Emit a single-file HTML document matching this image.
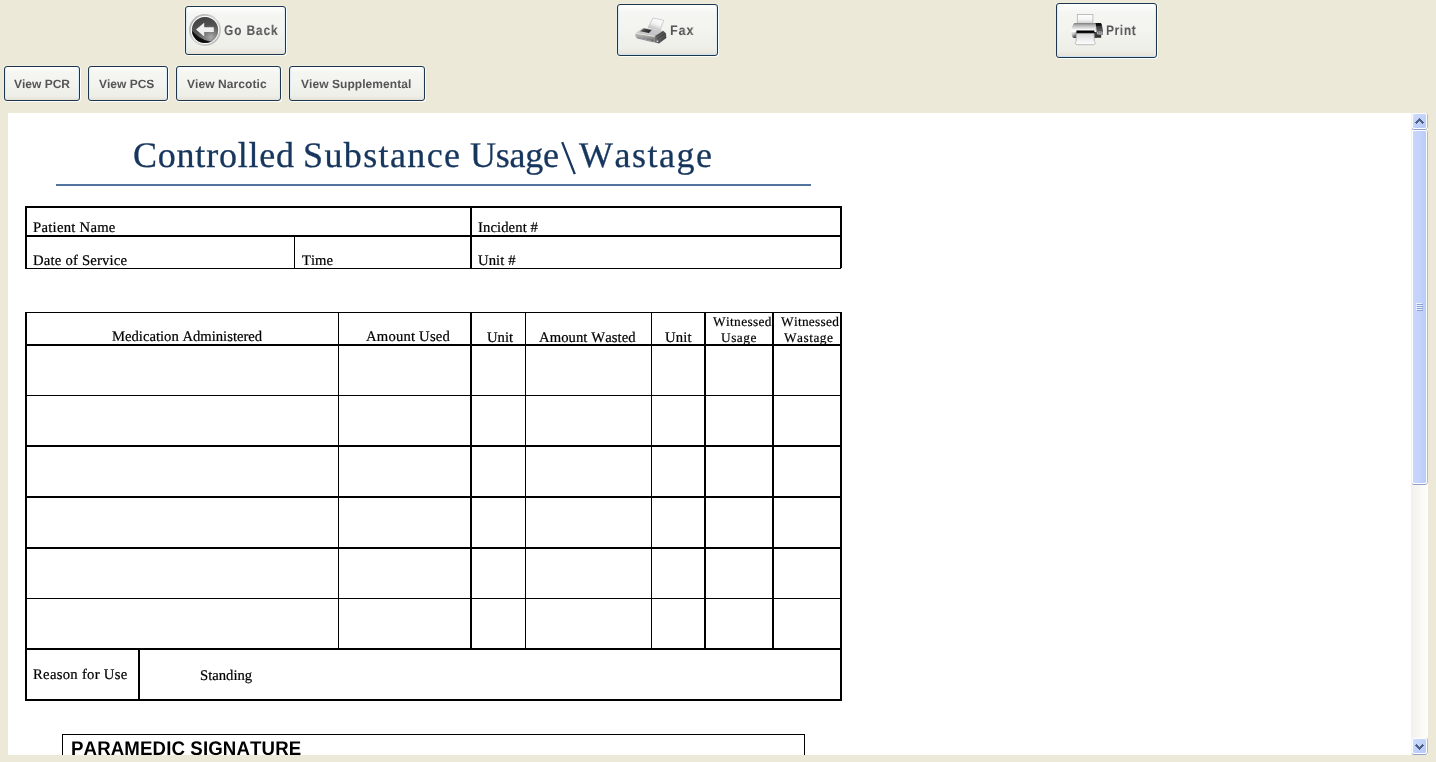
<!DOCTYPE html>
<html>
<head>
<meta charset="utf-8">
<title>Controlled Substance Usage\Wastage</title>
<style>
html,body{margin:0;padding:0;overflow:hidden;}
body{font-kerning:none;text-rendering:geometricPrecision;width:1436px;height:762px;overflow:hidden;background:#ece9d8;position:relative;font-family:"Liberation Sans",sans-serif;}
.abs{position:absolute;}
.btn{position:absolute;box-sizing:border-box;border:1px solid #1c364e;border-radius:3px;
  background:linear-gradient(to bottom,#ffffff 0%,#fbfbf9 6%,#f5f5f2 16%,#f3f3ef 50%,#efefe9 86%,#e9e6dc 96%,#e4dfd3 100%);
  box-shadow:1px 1px 0 rgba(255,255,255,0.75),0 0 0 1px rgba(255,255,255,0.2),inset 1px 0 0 #d9ecfa,inset -1px 0 0 #d9ecfa;}
.btn.df{box-shadow:1px 1px 0 rgba(255,255,255,0.75),0 0 0 1px rgba(255,255,255,0.2),inset 1px 0 0 #d9ecfa,inset -1px 0 0 #d9ecfa,inset 0 -1px 0 #cde0f1;}
.btn .lbl{will-change:transform;position:absolute;white-space:nowrap;font-weight:bold;color:#555555;line-height:1;}
.b2 .lbl{font-size:12px;}
#panel{position:absolute;left:8px;top:113px;width:1403px;height:642px;background:#ffffff;overflow:hidden;}
.ln{position:absolute;background:#000;}
.t{-webkit-text-stroke:0.22px #000;will-change:transform;position:absolute;white-space:nowrap;font-family:"Liberation Serif",serif;font-size:14.667px;line-height:1;color:#000;}
.ts{-webkit-text-stroke:0.2px #000;will-change:transform;position:absolute;white-space:nowrap;font-family:"Liberation Serif",serif;font-size:13.333px;line-height:1;color:#000;}
.tt{will-change:transform;-webkit-text-stroke:0.3px #17365d;position:absolute;white-space:nowrap;font-family:"Liberation Serif",serif;font-size:36px;line-height:1;color:#17365d;}
.sbbtn{position:absolute;box-sizing:border-box;width:15px;border:1px solid #ffffff;border-radius:2px;background:linear-gradient(135deg,#cddbfd 0%,#c1d2fa 50%,#b6caf7 100%);background-clip:padding-box;box-shadow:1px 0 0 #b4bccb,0 1px 0 #8fa1c6;}
</style>
</head>
<body>

<!-- top row buttons -->
<div class="btn" id="bBack" style="left:185px;top:6px;width:101px;height:49px;">
  <svg class="abs" style="left:3px;top:7px;" width="32" height="32" viewBox="0 0 32 32">
    <defs>
      <linearGradient id="ring" x1="0" y1="0" x2="1" y2="1">
        <stop offset="0" stop-color="#a4a4a4"/><stop offset="0.5" stop-color="#d6d6d6"/><stop offset="1" stop-color="#b0b0b0"/>
      </linearGradient>
      <linearGradient id="disc" x1="0.3" y1="0" x2="0.6" y2="1">
        <stop offset="0" stop-color="#404040"/><stop offset="0.6" stop-color="#5a5a5a"/><stop offset="1" stop-color="#6c6c6c"/>
      </linearGradient>
      <radialGradient id="dhl" cx="0.72" cy="0.78" r="0.5">
        <stop offset="0" stop-color="#b0b0b0" stop-opacity="0.95"/><stop offset="0.6" stop-color="#909090" stop-opacity="0.45"/><stop offset="1" stop-color="#808080" stop-opacity="0"/>
      </radialGradient>
      <clipPath id="dclip"><circle cx="16" cy="16" r="13"/></clipPath>
      <mask id="cres"><rect width="32" height="32" fill="#fff"/><circle cx="28" cy="-4" r="32.4" fill="#000"/></mask>
      <filter id="ib" x="-10%" y="-10%" width="120%" height="120%"><feGaussianBlur stdDeviation="0.45"/></filter>
    </defs>
    <circle cx="16" cy="16" r="15.9" fill="url(#ring)"/>
    <circle cx="16" cy="16" r="13.6" fill="none" stroke="#f8f8f8" stroke-width="1.3"/>
    <circle cx="16" cy="16" r="13.1" fill="url(#disc)"/>
    <circle cx="16" cy="16" r="13.1" fill="url(#dhl)"/>
    <g clip-path="url(#dclip)"><g filter="url(#ib)"><rect width="32" height="32" fill="#0a0a0a" mask="url(#cres)"/></g></g>
    <path d="M7 15.6 L15.2 8.8 L15.2 13.3 L24.8 13.3 L24.8 18 L15.2 18 L15.2 22.6 Z" fill="#f0f0f0" filter="url(#ib)"/>
  </svg>
  <span class="lbl" id="lBack" style="left:38px;top:16px;font-size:14px;letter-spacing:1.03px;transform:scaleX(0.85);transform-origin:0 0;">Go Back</span>
</div>

<div class="btn df" id="bFax" style="left:617px;top:4px;width:101px;height:52px;">
  <svg class="abs" style="left:14px;top:9px;" width="38" height="32" viewBox="632 14 38 32">
    <defs>
      <linearGradient id="fp" x1="0.7" y1="0" x2="0.2" y2="1"><stop offset="0" stop-color="#ffffff"/><stop offset="0.5" stop-color="#f2f2f2"/><stop offset="1" stop-color="#b4b4b4"/></linearGradient>
      <linearGradient id="ft" x1="0" y1="0" x2="0.3" y2="1"><stop offset="0" stop-color="#a8a8a8"/><stop offset="0.5" stop-color="#cbcbcb"/><stop offset="1" stop-color="#c2c2c2"/></linearGradient>
      <linearGradient id="ff" x1="0" y1="0" x2="0.15" y2="1"><stop offset="0" stop-color="#c0c0c0"/><stop offset="0.45" stop-color="#a2a2a2"/><stop offset="1" stop-color="#6c6c72"/></linearGradient>
      <linearGradient id="fs" x1="0" y1="0" x2="1" y2="0.6"><stop offset="0" stop-color="#9a9a9a"/><stop offset="0.45" stop-color="#686868"/><stop offset="1" stop-color="#404040"/></linearGradient>
      <linearGradient id="fd" x1="0" y1="0" x2="1" y2="0.5"><stop offset="0" stop-color="#747474"/><stop offset="0.6" stop-color="#3a3a3a"/><stop offset="1" stop-color="#262626"/></linearGradient>
      <filter id="fblur" x="-10%" y="-10%" width="120%" height="120%"><feGaussianBlur stdDeviation="0.4"/></filter>
    </defs>
    <g filter="url(#fblur)">
      <polygon points="653,18 663.7,20.3 660.2,29.8 648.2,27.4" fill="url(#fp)" stroke="#bdbdbd" stroke-width="0.7"/>
      <polygon points="643.3,27.9 663.1,30.6 654.7,35.9 635.6,33" fill="url(#ft)"/>
      <polygon points="651.9,30.6 658.4,31.6 655.6,33.6 649.6,32.6" fill="#c3c6d2"/>
      <polygon points="644,28.4 651.6,29.9 649,33 640,31.2" fill="url(#fd)"/>
      <path d="M635.2 33.6 L654.4 36.7 L654 42 L651.5 41.2 L650 40.4 L647.5 40.4 L646 39.6 L643.5 39.6 L642 38.8 L639.6 38.8 L638.2 38.2 L636.2 37.6 Q634.8 35.6 635.2 33.6Z" fill="url(#ff)"/>
      <path d="M654.6 36 L663.1 30.7 L666 33.3 L666.3 38 L659 43.5 L654.2 42.2 Z" fill="url(#fs)"/>
      <path d="M656 36.6 L663.4 32 M657 38.6 L664.4 33.8" stroke="#2c2c2c" stroke-width="0.7" fill="none"/>
      <rect x="654.4" y="37.6" width="2" height="2" fill="#6e6e6e"/>
      <rect x="656.6" y="40.6" width="1.6" height="1.4" fill="#dcdcdc"/>
      <path d="M636.8 37.9 L653 41.9" stroke="#77777c" stroke-width="0.7" fill="none"/>
    </g>
  </svg>
  <span class="lbl" id="lFax" style="left:52px;top:18px;font-size:14px;letter-spacing:1.0px;transform:scaleX(0.9);transform-origin:0 0;">Fax</span>
</div>

<div class="btn df" id="bPrint" style="left:1056px;top:3px;width:101px;height:55px;">
  <svg class="abs" style="left:11px;top:8px;" width="38" height="36" viewBox="1068 12 38 36">
    <defs>
      <linearGradient id="pp1" x1="0" y1="0" x2="0" y2="1"><stop offset="0" stop-color="#ffffff"/><stop offset="0.55" stop-color="#f4f4f4"/><stop offset="1" stop-color="#c9c9c9"/></linearGradient>
      <linearGradient id="pb1" x1="0" y1="0" x2="0" y2="1"><stop offset="0" stop-color="#7d7d7d"/><stop offset="0.35" stop-color="#b4b4b4"/><stop offset="1" stop-color="#f6f6f6"/></linearGradient>
      <linearGradient id="pl1" x1="0" y1="0" x2="0.6" y2="1"><stop offset="0" stop-color="#ffffff"/><stop offset="0.45" stop-color="#bdbdbd"/><stop offset="1" stop-color="#2e2e2e"/></linearGradient>
      <linearGradient id="pp2" x1="0" y1="0" x2="0" y2="1"><stop offset="0" stop-color="#d6d6d6"/><stop offset="0.5" stop-color="#ececec"/><stop offset="1" stop-color="#ffffff"/></linearGradient>
      <linearGradient id="pr1" x1="0" y1="0" x2="0" y2="1"><stop offset="0" stop-color="#1f1f1f"/><stop offset="0.5" stop-color="#5a5a5a"/><stop offset="1" stop-color="#2a2a2a"/></linearGradient>
      <filter id="pblur" x="-10%" y="-10%" width="120%" height="120%"><feGaussianBlur stdDeviation="0.35"/></filter>
    </defs>
    <g filter="url(#pblur)">
      <!-- right dark unit -->
      <path d="M1095 23 L1100.4 22.9 Q1101.5 23.1 1101.8 24.3 L1103 31 L1103 34.6 L1101.2 34.8 L1101.2 37.8 L1095 37.8 Z" fill="url(#pr1)"/>
      <rect x="1096.2" y="23" width="4.6" height="2.8" fill="#0c0c0c"/>
      <rect x="1097" y="31.4" width="5.6" height="3" rx="0.8" fill="#b9b9b9"/>
      <rect x="1098.2" y="32.2" width="1.2" height="1.3" fill="#5a5a5a"/><rect x="1100.2" y="32.2" width="1.2" height="1.3" fill="#5a5a5a"/>
      <!-- top paper -->
      <rect x="1077.3" y="14.5" width="15.6" height="9.5" fill="url(#pp1)" stroke="#b2b2b2" stroke-width="0.8"/>
      <!-- body top -->
      <path d="M1074.8 23 L1094.6 23 Q1095.6 23 1095.8 24 L1096.4 29.6 L1071.6 29.6 Q1072.8 23 1074.8 23 Z" fill="url(#pb1)"/>
      <!-- front band -->
      <path d="M1071.4 29.4 L1096.5 29.4 L1096.5 32.4 L1071.2 32.4 Q1070.6 30.6 1071.4 29.4Z" fill="#fbfbfb"/>
      <rect x="1076.4" y="30" width="18" height="0.9" fill="#8c8c8c"/>
      <!-- lower left body -->
      <path d="M1071.2 32 L1077 32 L1077 38 L1073.8 38 Q1071.6 37.4 1071.2 32Z" fill="url(#pl1)"/>
      <rect x="1093.8" y="32" width="2.8" height="5.8" fill="#3c3c3c"/>
      <!-- slot -->
      <rect x="1076.4" y="30.8" width="18" height="2.9" fill="#050505"/>
      <!-- output paper -->
      <path d="M1076.3 33.4 L1094.1 33.4 L1094.4 41.4 Q1095.2 42.2 1095.2 43.2 Q1095 44.7 1093.4 44.7 L1077 44.7 Q1075.3 44.7 1075.2 43.2 Q1075.2 42.2 1076 41.4 Z" fill="url(#pp2)" stroke="#a4a4a4" stroke-width="0.7"/>
    </g>
  </svg>
  <span class="lbl" id="lPrint" style="left:49px;top:19px;font-size:14px;letter-spacing:0.78px;transform:scaleX(0.85);transform-origin:0 0;">Print</span>
</div>

<!-- second row buttons -->
<div class="btn b2" style="left:4px;top:66px;width:76px;height:35px;"><span class="lbl" id="l1" style="left:9px;top:11px;">View PCR</span></div>
<div class="btn b2" style="left:88px;top:66px;width:80px;height:35px;"><span class="lbl" id="l2" style="left:10px;top:11px;">View PCS</span></div>
<div class="btn b2" style="left:176px;top:66px;width:105px;height:35px;"><span class="lbl" id="l3" style="left:10px;top:11px;letter-spacing:0.08px;">View Narcotic</span></div>
<div class="btn b2" style="left:289px;top:66px;width:136px;height:35px;"><span class="lbl" id="l4" style="left:11px;top:11px;letter-spacing:0.06px;">View Supplemental</span></div>

<!-- document panel -->
<div id="panel">
<!--LINES-->
<div class="abs" style="left:48px;top:71px;width:755px;height:2px;background:#52749f"></div>
<div class="ln" style="left:17px;top:93px;width:817px;height:2px"></div>
<div class="ln" style="left:17px;top:122px;width:817px;height:2px"></div>
<div class="ln" style="left:17px;top:155px;width:816px;height:1px"></div>
<div class="ln" style="left:17px;top:93px;width:2px;height:63px"></div>
<div class="ln" style="left:832px;top:93px;width:2px;height:62px"></div>
<div class="ln" style="left:462px;top:93px;width:2px;height:63px"></div>
<div class="ln" style="left:286px;top:124px;width:1px;height:32px"></div>
<div class="ln" style="left:17px;top:199px;width:817px;height:1px"></div>
<div class="ln" style="left:17px;top:231px;width:817px;height:2px"></div>
<div class="ln" style="left:17px;top:282px;width:817px;height:1px"></div>
<div class="ln" style="left:17px;top:332px;width:817px;height:2px"></div>
<div class="ln" style="left:17px;top:383px;width:817px;height:2px"></div>
<div class="ln" style="left:17px;top:434px;width:817px;height:2px"></div>
<div class="ln" style="left:17px;top:485px;width:817px;height:1px"></div>
<div class="ln" style="left:17px;top:535px;width:817px;height:2px"></div>
<div class="ln" style="left:17px;top:586px;width:817px;height:2px"></div>
<div class="ln" style="left:17px;top:199px;width:2px;height:389px"></div>
<div class="ln" style="left:832px;top:199px;width:2px;height:389px"></div>
<div class="ln" style="left:330px;top:199px;width:1px;height:338px"></div>
<div class="ln" style="left:462px;top:199px;width:2px;height:338px"></div>
<div class="ln" style="left:517px;top:199px;width:1px;height:338px"></div>
<div class="ln" style="left:643px;top:199px;width:1px;height:338px"></div>
<div class="ln" style="left:696px;top:199px;width:2px;height:338px"></div>
<div class="ln" style="left:764px;top:199px;width:2px;height:338px"></div>
<div class="ln" style="left:130px;top:537px;width:2px;height:51px"></div>
<div class="ln" style="left:54px;top:621px;width:743px;height:1px"></div>
<div class="ln" style="left:54px;top:621px;width:1px;height:27px"></div>
<div class="ln" style="left:796px;top:621px;width:1px;height:27px"></div>
<!--/LINES-->
<!--TEXT-->
<span class="tt" id="w1" style="left:125.00px;top:24px;letter-spacing:0.78px;">Controlled</span>
<span class="tt" id="w2" style="left:295.00px;top:24px;letter-spacing:1.38px;">Substance</span>
<span class="tt" id="w3" style="left:462.00px;top:24px;letter-spacing:-0.25px;">Usage</span>
<span class="tt" id="w5" style="left:570.50px;top:24px;letter-spacing:1.50px;">Wastage</span>
<svg class="abs" style="left:551px;top:27px" width="24" height="40" viewBox="0 0 24 40"><line x1="3.2" y1="2.2" x2="15.8" y2="34.2" stroke="#17365d" stroke-width="2.3"/></svg>
<span class="t" id="tPN" style="left:24.50px;top:107.72px;letter-spacing:0.27px;">Patient Name</span>
<span class="t" id="tIN" style="left:469.50px;top:107.72px;letter-spacing:0.10px;">Incident #</span>
<span class="t" id="tDS" style="left:24.50px;top:140.72px;letter-spacing:0.21px;">Date of Service</span>
<span class="t" id="tTM" style="left:293.90px;top:140.72px;">Time</span>
<span class="t" id="tUN" style="left:469.50px;top:140.72px;letter-spacing:0.10px;">Unit #</span>
<span class="t" id="tMA" style="left:104.10px;top:216.72px;">Medication Administered</span>
<span class="t" id="tAU" style="left:357.50px;top:216.72px;letter-spacing:0.20px;">Amount Used</span>
<span class="t" id="tU1" style="left:479.20px;top:217.72px;">Unit</span>
<span class="t" id="tAW" style="left:530.50px;top:217.72px;letter-spacing:0.08px;">Amount Wasted</span>
<span class="t" id="tU2" style="left:656.90px;top:217.72px;letter-spacing:0.15px;">Unit</span>
<span class="ts" id="tW1" style="left:704.90px;top:202.23px;letter-spacing:0.37px;">Witnessed</span>
<span class="ts" id="tUs" style="left:713.40px;top:218.23px;letter-spacing:0.50px;">Usage</span>
<span class="ts" id="tW2" style="left:772.60px;top:202.23px;letter-spacing:0.30px;">Witnessed</span>
<span class="ts" id="tWa" style="left:775.80px;top:218.23px;letter-spacing:0.50px;">Wastage</span>
<span class="t" id="tRU" style="left:24.70px;top:554.72px;letter-spacing:0.30px;">Reason for Use</span>
<span class="t" id="tSt" style="left:191.70px;top:555.72px;">Standing</span>
<span class="abs" id="sig" style="left:63px;top:626.5px;white-space:nowrap;font-family:'Liberation Sans',sans-serif;font-weight:bold;font-size:18.667px;letter-spacing:0.12px;line-height:1;color:#000;transform:scaleY(1.06);transform-origin:0 100%;">PARAMEDIC SIGNATURE</span>
<!--/TEXT-->
</div>

<!-- scrollbar -->
<div class="abs" id="sbtrack" style="left:1411px;top:113px;width:17px;height:642px;background:linear-gradient(to right,#f2f0eb 0%,#f8f7f3 45%,#fefefb 100%);"></div>
<div class="sbbtn" style="left:1412px;top:113px;height:16px;">
  <svg class="abs" style="left:2px;top:4px" width="9" height="6" viewBox="0 0 9 6" shape-rendering="crispEdges"><path d="M4 0h1v1h1v1h1v1h1v1h1v1h-1v1h-1v-1h-1v-1h-1v-1h-1v1h-1v1h-1v1h-1v-1h-1v-1h1v-1h1v-1h1v-1h1z" fill="#4d6185"/></svg>
</div>
<div class="sbbtn" style="left:1412px;top:130px;height:354px;background:linear-gradient(to right,#c8d6fb 0%,#c4d3fb 50%,#b8ccf8 100%);background-clip:padding-box;">
  <div class="abs" style="left:3px;top:172px;width:6px;height:1px;background:#eef4fe;box-shadow:0 2px 0 #eef4fe,0 4px 0 #eef4fe,0 6px 0 #eef4fe,1px 1px 0 #8ca0d0,1px 3px 0 #8ca0d0,1px 5px 0 #8ca0d0,1px 7px 0 #8ca0d0;"></div>
</div>
<div class="sbbtn" style="left:1412px;top:738px;height:16px;">
  <svg class="abs" style="left:2px;top:5px" width="9" height="6" viewBox="0 0 9 6" shape-rendering="crispEdges"><path transform="translate(0,6) scale(1,-1)" d="M4 0h1v1h1v1h1v1h1v1h1v1h-1v1h-1v-1h-1v-1h-1v-1h-1v1h-1v1h-1v1h-1v-1h-1v-1h1v-1h1v-1h1v-1h1z" fill="#4d6185"/></svg>
</div>

</body>
</html>
